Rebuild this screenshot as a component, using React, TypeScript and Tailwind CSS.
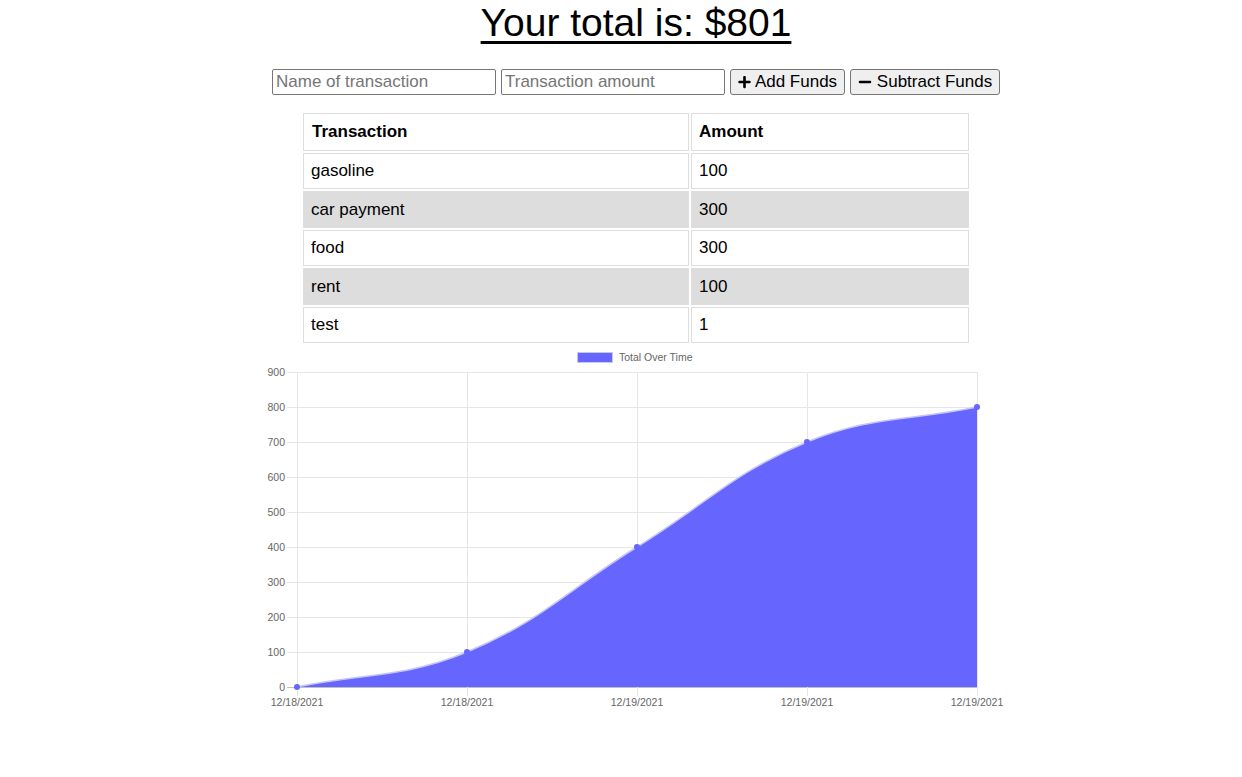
import { FaPlus, FaMinus } from "react-icons/fa";

const transactions = [
  { name: "gasoline", value: 100 },
  { name: "car payment", value: 300 },
  { name: "food", value: 300 },
  { name: "rent", value: 100 },
  { name: "test", value: 1 },
];

// chart geometry in page coordinates
const left = 297;
const right = 977;
const top = 372;
const bottom = 687;
const yTicks = [900, 800, 700, 600, 500, 400, 300, 200, 100, 0];
const xs = [297, 467, 637, 807, 977];
const labels = ["12/18/2021", "12/18/2021", "12/19/2021", "12/19/2021", "12/19/2021"];
const values = [0, 100, 400, 700, 800];

const yOf = (v: number) => bottom - (v / 900) * (bottom - top);

function buildPath() {
  const pts = xs.map((x, i) => ({ x, y: yOf(values[i]) }));
  const t = 0.4;
  const cps = pts.map((cur, i) => {
    const prev = pts[i - 1] ?? cur;
    const next = pts[i + 1] ?? cur;
    const d01 = Math.hypot(cur.x - prev.x, cur.y - prev.y);
    const d12 = Math.hypot(next.x - cur.x, next.y - cur.y);
    const sum = d01 + d12 || 1;
    const fa = (t * d01) / sum;
    const fb = (t * d12) / sum;
    return {
      prev: { x: cur.x - fa * (next.x - prev.x), y: cur.y - fa * (next.y - prev.y) },
      next: { x: cur.x + fb * (next.x - prev.x), y: cur.y + fb * (next.y - prev.y) },
    };
  });
  let d = `M${pts[0].x},${pts[0].y}`;
  for (let i = 1; i < pts.length; i++) {
    const a = cps[i - 1].next;
    const b = cps[i].prev;
    d += ` C${a.x},${a.y} ${b.x},${b.y} ${pts[i].x},${pts[i].y}`;
  }
  return { line: d, area: `${d} L${right},${bottom} L${left},${bottom} Z`, pts };
}

function Chart() {
  const { line, area, pts } = buildPath();
  return (
    <svg
      width={750}
      height={375}
      viewBox="261 345 750 375"
      style={{ fontFamily: '"Liberation Sans", Arial, sans-serif' }}
    >
      {/* legend */}
      <rect x={577.5} y={352.5} width={35} height={10} fill="#6666ff" stroke="#c8c8f8" />
      <text x={619} y={361} fontSize={10.5} fill="#666">
        Total Over Time
      </text>

      {/* horizontal grid */}
      {yTicks.map((v) => (
        <g key={v}>
          <line
            x1={287}
            x2={right}
            y1={yOf(v) + 0.5}
            y2={yOf(v) + 0.5}
            stroke={v === 0 ? "#bfbfbf" : "#e6e6e6"}
          />
          <text x={285} y={yOf(v) + 4} fontSize={10.5} fill="#666" textAnchor="end">
            {v}
          </text>
        </g>
      ))}

      {/* vertical grid */}
      {xs.map((x, i) => (
        <g key={i}>
          <line x1={x + 0.5} x2={x + 0.5} y1={top} y2={bottom + 9} stroke="#e6e6e6" />
          <text x={x} y={706} fontSize={10.5} fill="#666" textAnchor="middle">
            {labels[i]}
          </text>
        </g>
      ))}

      <path d={area} fill="#6666ff" />
      <path d={line} fill="none" stroke="#c4c4fa" strokeWidth={1.5} />
      {pts.map((p, i) => (
        <circle key={i} cx={p.x} cy={p.y} r={3} fill="#6666ff" />
      ))}
    </svg>
  );
}

export default function App() {
  return (
    <div
      className="flex min-h-[777px] w-full flex-col items-center bg-white pl-[30px] text-black"
      style={{ fontFamily: '"Liberation Sans", Arial, sans-serif' }}
    >
      <h1 className="h-[45px] text-[39px] leading-[45px] font-normal underline decoration-[3px] underline-offset-[5px]">
        Your total is: $801
      </h1>

      <div className="mt-[24px] flex h-[26px] gap-[5px] text-[17px]">
        <input
          type="text"
          placeholder="Name of transaction"
          className="h-[26px] w-[224px] rounded-[2px] border border-[#767676] px-[3px] placeholder:text-[#757575]"
        />
        <input
          type="text"
          placeholder="Transaction amount"
          className="h-[26px] w-[224px] rounded-[2px] border border-[#767676] px-[3px] placeholder:text-[#757575]"
        />
        <button className="flex h-[26px] w-[115px] items-center justify-center gap-[4px] rounded-[3px] border border-[#767676] bg-[#efefef]">
          <FaPlus className="h-[14px] w-[13px]" />
          Add Funds
        </button>
        <button className="flex h-[26px] w-[150px] items-center justify-center gap-[5px] rounded-[3px] border border-[#767676] bg-[#efefef]">
          <FaMinus className="h-[14px] w-[14px]" />
          Subtract Funds
        </button>
      </div>

      <table className="mt-[16px] w-[670px] table-fixed border-separate border-spacing-[2px] text-[17px]">
        <colgroup>
          <col className="w-[386px]" />
          <col />
        </colgroup>
        <thead>
          <tr>
            <th className="h-[38px] border border-[#dedede] px-[8px] text-left font-bold">Transaction</th>
            <th className="h-[38px] border border-[#dedede] px-[7px] text-left font-bold">Amount</th>
          </tr>
        </thead>
        <tbody>
          {transactions.map((t, i) => (
            <tr key={t.name} className={i % 2 === 1 ? "bg-[#dddddd]" : ""}>
              <td className="h-[36.4px] border border-[#dedede] px-[7px]">{t.name}</td>
              <td className="h-[36.4px] border border-[#dedede] px-[7px]">{t.value}</td>
            </tr>
          ))}
        </tbody>
      </table>

      <div>
        <Chart />
      </div>
    </div>
  );
}
